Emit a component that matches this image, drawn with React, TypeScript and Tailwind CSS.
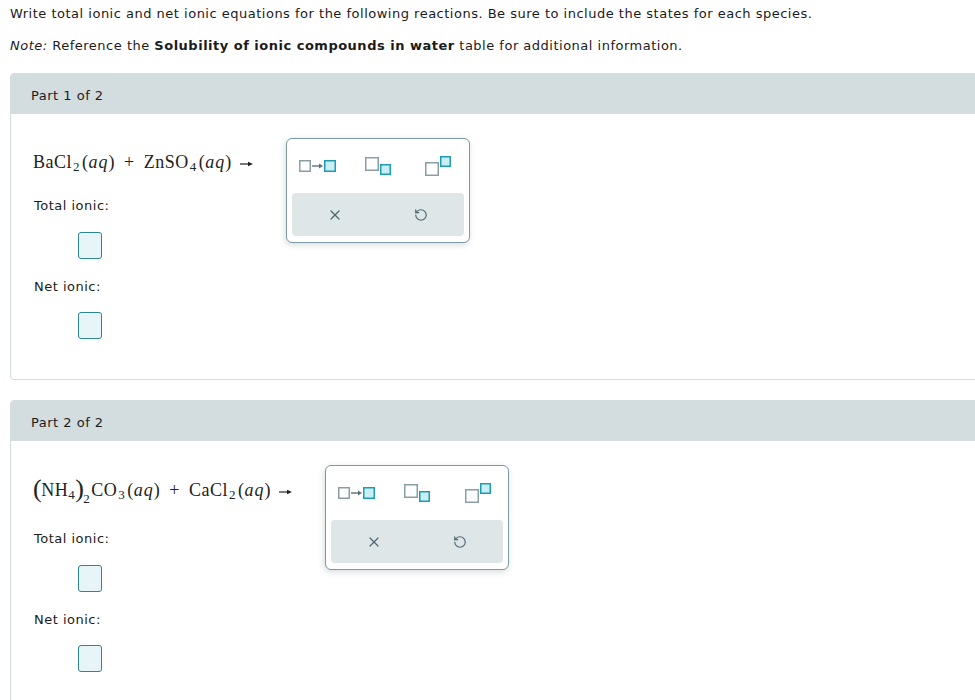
import React from 'react';
import { X, RotateCcw } from 'lucide-react';

const Sub = ({ children, low = false, tight = false }: { children: React.ReactNode; low?: boolean; tight?: boolean }) => (
  <span
    className={`text-[13px] leading-none relative ${tight ? 'mr-px' : 'ml-px mr-[2px]'} ${low ? 'top-[8px]' : 'top-[4px]'}`}
  >
    {children}
  </span>
);

const Arrow = () => (
  <svg width="14" height="8" viewBox="0 0 14 8" className="inline-block ml-[8px] mt-[3px]">
    <line x1="0" y1="4" x2="9" y2="4" stroke="#222" strokeWidth="1.2" />
    <polygon points="8,1.8 13,4 8,6.2" fill="#222" />
  </svg>
);

const Aq = () => (
  <span>
    (<i className="tracking-[1px]">aq</i>)
  </span>
);

const eqClass =
  "flex items-center whitespace-nowrap font-['Liberation_Serif',serif] text-[18px] tracking-[0.5px] text-[#222]";

function Equation1() {
  return (
    <div className={`h-[24px] ${eqClass}`}>
      <span>BaCl</span>
      <Sub>2</Sub>
      <Aq />
      <span className="mx-[9px]">+</span>
      <span>ZnSO</span>
      <Sub>4</Sub>
      <Aq />
      <Arrow />
    </div>
  );
}

function Equation2() {
  return (
    <div className={`h-[30px] ${eqClass}`}>
      <span className="text-[26px] leading-none relative top-[-1px] -mr-px">(</span>
      <span>NH</span>
      <Sub tight>4</Sub>
      <span className="text-[26px] leading-none relative top-[-1px] -ml-px -mr-px">)</span>
      <Sub low tight>2</Sub>
      <span>CO</span>
      <Sub>3</Sub>
      <Aq />
      <span className="mx-[9px]">+</span>
      <span>CaCl</span>
      <Sub>2</Sub>
      <Aq />
      <Arrow />
    </div>
  );
}

function Toolbox() {
  return (
    <div className="w-[184px] h-[105px] shrink-0 border border-[#7b9aa3] rounded-[6px] bg-white shadow-[-1px_2px_6px_rgba(60,80,90,0.2)] flex flex-col">
      <div className="h-[54px] grid grid-cols-3 items-center">
        <div className="flex justify-center">
          <svg width="37" height="12" viewBox="0 0 37 12">
            <rect x="0.75" y="0.75" width="10.5" height="10.5" fill="white" stroke="#8a9ea5" strokeWidth="1.5" />
            <line x1="13" y1="6" x2="21" y2="6" stroke="#5d7078" strokeWidth="1.4" />
            <polygon points="20,3.5 24,6 20,8.5" fill="#5d7078" />
            <rect x="25.75" y="0.75" width="10.5" height="10.5" fill="#c9eef4" stroke="#1c9db3" strokeWidth="1.5" />
          </svg>
        </div>
        <div className="flex justify-center">
          <svg width="26" height="18" viewBox="0 0 26 18">
            <rect x="0.75" y="0.75" width="12.5" height="12.5" fill="white" stroke="#8a9ea5" strokeWidth="1.5" />
            <rect x="15.75" y="7.75" width="9.5" height="9.5" fill="#c9eef4" stroke="#1c9db3" strokeWidth="1.5" />
          </svg>
        </div>
        <div className="flex justify-center">
          <svg width="26" height="20" viewBox="0 0 26 20">
            <rect x="0.75" y="6.75" width="12.5" height="12.5" fill="white" stroke="#8a9ea5" strokeWidth="1.5" />
            <rect x="15.75" y="0.75" width="9.5" height="9.5" fill="#c9eef4" stroke="#1c9db3" strokeWidth="1.5" />
          </svg>
        </div>
      </div>
      <div className="mx-[5px] h-[43px] bg-[#dfe6e8] rounded-[4px] grid grid-cols-2 items-center">
        <div className="flex justify-center">
          <X className="w-[16px] h-[16px] text-[#4f6670]" strokeWidth={1.8} />
        </div>
        <div className="flex justify-center">
          <RotateCcw className="w-[14px] h-[14px] text-[#4f6670]" strokeWidth={2} />
        </div>
      </div>
    </div>
  );
}

const AnswerBox = ({ className = '' }: { className?: string }) => (
  <div className={`ml-[45px] w-[24px] h-[27px] bg-[#e7f4f8] border border-[#2e8690] rounded-[3px] ${className}`} />
);

function Part({ n, eq, two }: { n: number; eq: React.ReactNode; two?: boolean }) {
  return (
    <div className="w-[1000px] border border-[#d3dcdf] rounded-[4px] pb-[40px]">
      <div className="h-[40px] bg-[#d3dcdf] pl-[20px] pt-[3px] flex items-center rounded-t-[3px]">
        <span>Part {n} of 2</span>
      </div>
      <div className="pl-[22px] flex items-start">
        <div className={two ? 'pt-[34px]' : 'pt-[36px]'}>
          {eq}
          <div className={`leading-[16px] pl-px ${two ? 'mt-[26px]' : 'mt-[24px]'}`}>Total ionic:</div>
          <AnswerBox className="mt-[18px]" />
          <div className="leading-[16px] pl-px mt-[20px]">Net ionic:</div>
          <AnswerBox className="mt-[17px]" />
        </div>
        <div className="ml-[32px] mt-[24px]">
          <Toolbox />
        </div>
      </div>
    </div>
  );
}

export default function App() {
  return (
    <div className="w-[975px] h-[700px] overflow-hidden bg-white font-['DejaVu_Sans',Verdana,sans-serif] text-[13px] tracking-[0.5px] text-[#1b1b1b]">
      <div className="pl-[10px] pt-[6px]">
        <p className="leading-[16px]">
          Write total ionic and net ionic equations for the following reactions. Be sure to include the states for each species.
        </p>
        <p className="leading-[16px] mt-[16px]">
          <i>Note:</i> Reference the <b>Solubility of ionic compounds in water</b> table for additional information.
        </p>
        <div className="mt-[19px]">
          <Part n={1} eq={<Equation1 />} />
        </div>
        <div className="mt-[20px]">
          <Part n={2} eq={<Equation2 />} two />
        </div>
      </div>
    </div>
  );
}
